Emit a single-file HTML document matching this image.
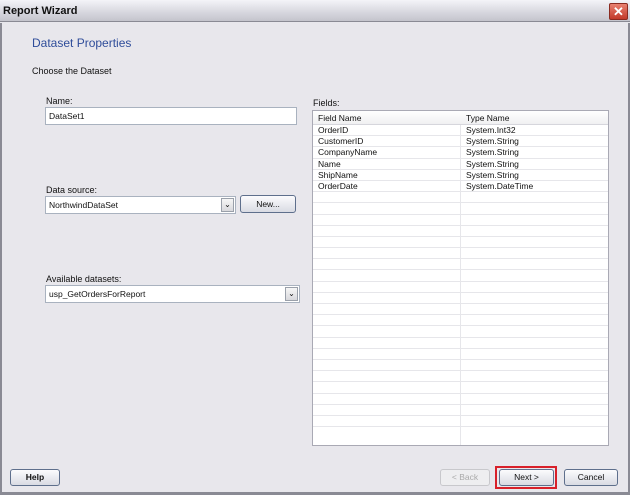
<!DOCTYPE html>
<html><head><style>
*{margin:0;padding:0;box-sizing:border-box}
body{width:630px;height:495px;overflow:hidden;background:#e8e7ec;font-family:"Liberation Sans",sans-serif;font-size:9px;color:#111;position:relative}
.a{position:absolute}
.title{left:0;top:0;width:630px;height:22px;background:linear-gradient(#f4f4f8,#d6d6de 60%,#c4c4cc);border-bottom:1px solid #8a8a94;font-weight:bold;font-size:11px;padding:5px 0 0 3px}
.x{left:609px;top:3px;width:19px;height:17px;background:linear-gradient(#e88070,#c23a2a);border:1px solid #8a2a20;border-radius:2px;color:#fff;font-size:13px;text-align:center;line-height:15px;font-weight:bold}
.inp{background:#fff;border:1px solid #a9b2bf;padding:0 3px;font-size:8.5px;line-height:16px}
.dd{position:absolute;right:1px;top:1px;width:13px;height:14px;background:linear-gradient(#f6f6f6,#d8d8dc);border:1px solid #9aa0aa;font-size:8px;text-align:center;line-height:12px}
.btn{background:linear-gradient(#fbfbfd,#d9dbe3);border:1px solid #5e6f8c;border-radius:3px;text-align:center;font-size:8.5px;line-height:15px}
.grid{left:312px;top:110px;width:297px;height:336px;background:#fff;border:1px solid #a9a9b4}
.row{height:11.2px;border-bottom:1px solid #e6e6ea;position:relative;font-size:8.5px;line-height:11px;padding-left:5px}
.row span{position:absolute;left:153px}
</style></head><body>
<div class="a title">Report Wizard</div>
<div class="a x">✕</div>
<div class="a" style="left:0;top:23px;width:2px;height:472px;background:#8a8a94"></div>
<div class="a" style="right:0;top:23px;width:2px;height:472px;background:#8a8a94"></div>
<div class="a" style="left:0;top:492px;width:630px;height:3px;background:#8a8a94"></div>
<div class="a" style="left:32px;top:36px;font-size:12px;color:#2f4d9a">Dataset Properties</div>
<div class="a" style="left:32px;top:66px">Choose the Dataset</div>
<div class="a" style="left:46px;top:96px">Name:</div>
<div class="a inp" style="left:45px;top:107px;width:252px;height:18px">DataSet1</div>
<div class="a" style="left:46px;top:185px">Data source:</div>
<div class="a inp" style="left:45px;top:196px;width:191px;height:18px">NorthwindDataSet<div class="dd">⌄</div></div>
<div class="a btn" style="left:240px;top:195px;width:56px;height:18px;line-height:16px">New...</div>
<div class="a" style="left:46px;top:274px">Available datasets:</div>
<div class="a inp" style="left:45px;top:285px;width:255px;height:18px">usp_GetOrdersForReport<div class="dd">⌄</div></div>
<div class="a" style="left:313px;top:98px">Fields:</div>
<div class="a grid">
<div style="position:absolute;left:147px;top:0;width:1px;height:334px;background:#e6e6ea"></div>
<div class="row" style="height:14px;line-height:14px;background:linear-gradient(#fff,#f0f0f2);border-bottom:1px solid #d6d6dc">Field Name<span>Type Name</span></div>
<div class="row">OrderID<span>System.Int32</span></div>
<div class="row">CustomerID<span>System.String</span></div>
<div class="row">CompanyName<span>System.String</span></div>
<div class="row">Name<span>System.String</span></div>
<div class="row">ShipName<span>System.String</span></div>
<div class="row">OrderDate<span>System.DateTime</span></div>
<div class="row"></div><div class="row"></div><div class="row"></div><div class="row"></div><div class="row"></div><div class="row"></div><div class="row"></div><div class="row"></div><div class="row"></div><div class="row"></div><div class="row"></div><div class="row"></div><div class="row"></div><div class="row"></div><div class="row"></div><div class="row"></div><div class="row"></div><div class="row"></div><div class="row"></div><div class="row"></div><div class="row"></div>
</div>
<div class="a btn" style="left:10px;top:469px;width:50px;height:17px;font-weight:bold">Help</div>
<div class="a btn" style="left:440px;top:469px;width:50px;height:17px;color:#aaa;border-color:#c8c8cc;background:#eeeef0">&lt; Back</div>
<div class="a" style="left:495px;top:466px;width:62px;height:23px;border:2px solid #d8202a"></div>
<div class="a btn" style="left:499px;top:469px;width:55px;height:17px">Next &gt;</div>
<div class="a btn" style="left:564px;top:469px;width:54px;height:17px">Cancel</div>
</body></html>
